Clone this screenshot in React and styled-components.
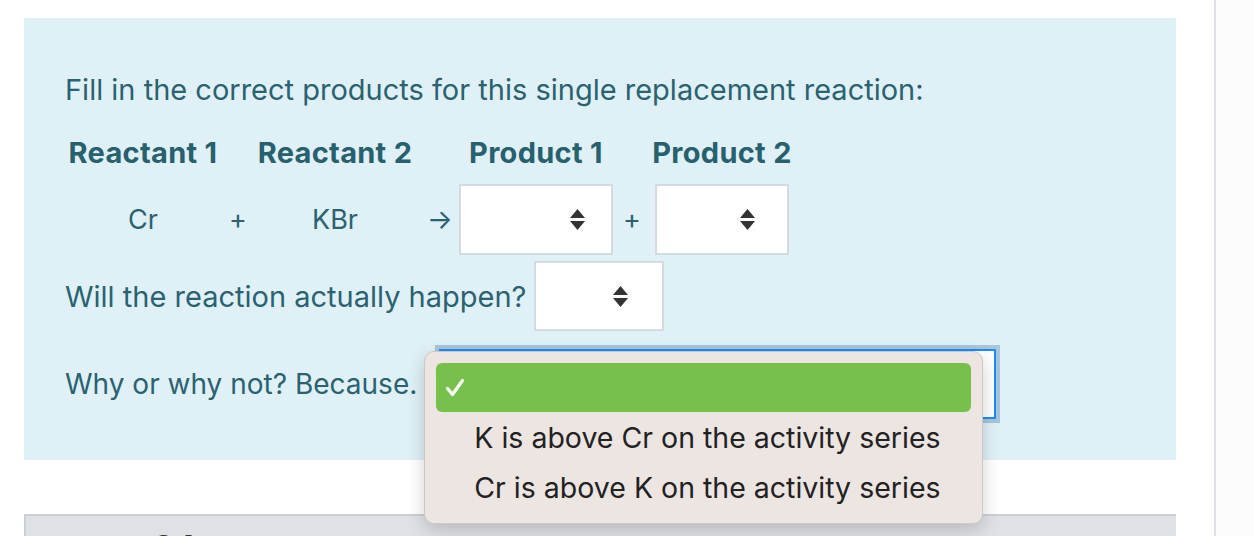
import styled, { createGlobalStyle } from 'styled-components';

const GlobalStyle = createGlobalStyle`
  body {
    margin: 0;
    background: #ffffff;
    font-family: Inter, "Noto Sans", sans-serif;
  }
`;

const Page = styled.div`
  display: flex;
  height: 536px;
  overflow: hidden;
`;

const Main = styled.div`
  width: 1152px;
  padding: 18px 38px 0 24px;
  border-right: 2px solid #dde1e6;
  background: #ffffff;
`;

const Side = styled.div`
  flex: 1;
  background: #fcfcfc;
`;

const QuestionBox = styled.div`
  background: #dff1f7;
  padding: 54px 41px 41px;
  color: #2a6272;
`;

const Prompt = styled.p`
  margin: 0;
  font-size: 29px;
  line-height: 36px;
  white-space: nowrap;
`;

const Equation = styled.div`
  display: grid;
  grid-template-columns: 152px 38px 156px 46px 154px 38px 142px;
  grid-template-rows: 36px 71px;
  row-gap: 14px;
  align-items: center;
  justify-items: center;
  margin: 26px 0 0 2px;
`;

const Heading = styled.div`
  font-size: 29px;
  font-weight: 700;
  letter-spacing: 0.3px;
  color: #27606e;
  white-space: nowrap;
`;

const Term = styled.div`
  font-size: 27px;
  padding-left: ${(p) => p.$shift || 0}px;
`;

const Row = styled.div`
  display: flex;
  align-items: center;
  gap: ${(p) => p.$gap}px;
  margin-top: ${(p) => p.$top}px;
  font-size: ${(p) => p.$size || 29}px;
  white-space: nowrap;
`;

const SelectWrap = styled.div`
  position: relative;
`;

const SelectBox = styled.div`
  box-sizing: border-box;
  width: ${(p) => p.$w}px;
  height: ${(p) => p.$h}px;
  background: #ffffff;
  border: 2px solid ${(p) => (p.$focus ? '#1a8cff' : '#d3dbe1')};
  outline: ${(p) => (p.$focus ? '4px solid #a9c5da' : 'none')};
  display: flex;
  align-items: center;
  justify-content: flex-end;
  padding-right: ${(p) => p.$pr}px;
`;

const Popup = styled.div`
  position: absolute;
  left: -15px;
  top: 2px;
  width: 559px;
  box-sizing: border-box;
  padding: 11px;
  background: #ece5e2;
  border: 1px solid #cfc7c4;
  border-radius: 10px;
  box-shadow: 0 6px 18px rgba(0, 0, 0, 0.18);
  z-index: 2;
`;

const Option = styled.div`
  height: ${(p) => (p.$active ? 49 : 50)}px;
  display: flex;
  align-items: center;
  padding-left: ${(p) => (p.$active ? 9 : 38)}px;
  border-radius: 6px;
  background: ${(p) => (p.$active ? '#76c04b' : 'transparent')};
  color: #222222;
  font-size: 28.5px;
  white-space: nowrap;
`;

const NextCard = styled.div`
  margin-top: 54px;
  height: 60px;
  background: #dee2e6;
  border-top: 2px solid #cbd0d6;
  border-left: 2px solid #cbd0d6;
  padding: 12px 0 0 126px;
  font-size: 30px;
  font-weight: 700;
  color: #333;
`;

const Arrows = () => (
  <svg width="15" height="21" viewBox="0 0 15 21">
    <path d="M7.5 0 L15 9 L0 9 Z" fill="#333" />
    <path d="M0 12 L15 12 L7.5 21 Z" fill="#333" />
  </svg>
);

const Check = () => (
  <svg width="20" height="19" viewBox="0 0 20 19">
    <path d="M2.5 10.5 L7.5 16.5 L17.5 2.5" fill="none" stroke="#fff" strokeWidth="3.2" strokeLinecap="round" strokeLinejoin="round" />
  </svg>
);

const Select = ({ w, h = 71, pr = 26 }) => (
  <SelectBox $w={w} $h={h} $pr={pr}>
    <Arrows />
  </SelectBox>
);

export default function App() {
  return (
    <>
      <GlobalStyle />
      <Page>
        <Main>
          <QuestionBox>
            <Prompt>Fill in the correct products for this single replacement reaction:</Prompt>
            <Equation>
              <Heading>Reactant 1</Heading>
              <span />
              <Heading>Reactant 2</Heading>
              <span />
              <Heading>Product 1</Heading>
              <span />
              <Heading>Product 2</Heading>

              <Term>Cr</Term>
              <Term>+</Term>
              <Term>KBr</Term>
              <Term $shift={8}>→</Term>
              <Select w={154} />
              <Term>+</Term>
              <Select w={134} pr={32} />
            </Equation>
            <Row $gap={8} $top={6}>
              Will the reaction actually happen?
              <Select w={130} h={70} pr={34} />
            </Row>
            <Row $gap={22} $top={18} $size={28}>
              Why or why not? Because.
              <SelectWrap>
                <SelectBox $w={557} $h={70} $focus />
                <Popup>
                  <Option $active>
                    <Check />
                  </Option>
                  <Option>K is above Cr on the activity series</Option>
                  <Option>Cr is above K on the activity series</Option>
                </Popup>
              </SelectWrap>
            </Row>
          </QuestionBox>
          <NextCard>Q4</NextCard>
        </Main>
        <Side />
      </Page>
    </>
  );
}
